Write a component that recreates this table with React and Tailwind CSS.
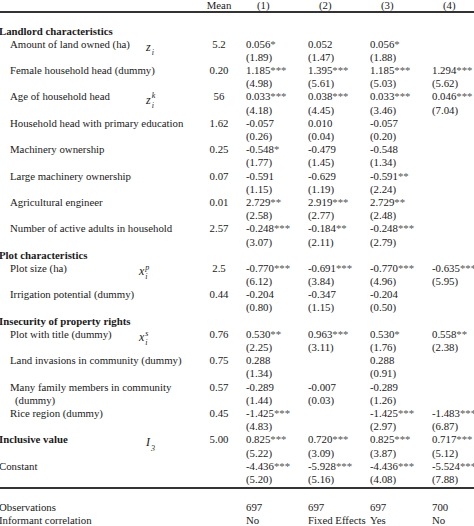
import React from "react";

const Sym = ({ b, sub, sup }) => (
  <span className="inline-flex items-center italic text-[12px]">
    <span>{b}</span>
    <span className="inline-flex flex-col text-[8px] ml-[1px] mt-[1px]">
      <span className="h-[9.2px] leading-[9.2px]">{sup || ""}</span>
      <span className="h-[9.2px] leading-[9.2px]">{sub}</span>
    </span>
  </span>
);

const Val = ({ v }) => {
  if (!v) return null;
  const m = v.match(/^([^*]*)(\**)$/);
  return (
    <>
      {m[1]}
      {m[2] && <span className="text-[#555]">{m[2]}</span>}
    </>
  );
};

const rows = [
  { head: "Landlord characteristics" },
  { label: "Amount of land owned (ha)", sym: { b: "z", sub: "i" }, symPad: "pl-[7px]", mean: "5.2", v: [["0.056*", "(1.89)"], ["0.052", "(1.47)"], ["0.056*", "(1.88)"], null] },
  { label: "Female household head (dummy)", mean: "0.20", v: [["1.185***", "(4.98)"], ["1.395***", "(5.61)"], ["1.185***", "(5.03)"], ["1.294***", "(5.62)"]] },
  { label: "Age of household head", sym: { b: "z", sub: "i", sup: "k" }, symPad: "pl-[7px]", mean: "56", v: [["0.033***", "(4.18)"], ["0.038***", "(4.45)"], ["0.033***", "(3.46)"], ["0.046***", "(7.04)"]] },
  { label: "Household head with primary education", mean: "1.62", v: [["-0.057", "(0.26)"], ["0.010", "(0.04)"], ["-0.057", "(0.20)"], null] },
  { label: "Machinery ownership", mean: "0.25", v: [["-0.548*", "(1.77)"], ["-0.479", "(1.45)"], ["-0.548", "(1.34)"], null] },
  { label: "Large machinery ownership", mean: "0.07", v: [["-0.591", "(1.15)"], ["-0.629", "(1.19)"], ["-0.591**", "(2.24)"], null] },
  { label: "Agricultural engineer", mean: "0.01", v: [["2.729**", "(2.58)"], ["2.919***", "(2.77)"], ["2.729**", "(2.48)"], null] },
  { label: "Number of active adults in household", mean: "2.57", v: [["-0.248***", "(3.07)"], ["-0.184**", "(2.11)"], ["-0.248***", "(2.79)"], null] },
  { head: "Plot characteristics" },
  { label: "Plot size (ha)", sym: { b: "x", sub: "i", sup: "p" }, symPad: "pl-[0px]", mean: "2.5", v: [["-0.770***", "(6.12)"], ["-0.691***", "(3.84)"], ["-0.770***", "(4.96)"], ["-0.635***", "(5.95)"]] },
  { label: "Irrigation potential (dummy)", mean: "0.44", v: [["-0.204", "(0.80)"], ["-0.347", "(1.15)"], ["-0.204", "(0.50)"], null] },
  { head: "Insecurity of property rights" },
  { label: "Plot with title (dummy)", sym: { b: "x", sub: "i", sup: "s" }, symPad: "pl-[0px]", mean: "0.76", v: [["0.530**", "(2.25)"], ["0.963***", "(3.11)"], ["0.530*", "(1.76)"], ["0.558**", "(2.38)"]] },
  { label: "Land invasions in community (dummy)", mean: "0.75", v: [["0.288", "(1.34)"], null, ["0.288", "(0.91)"], null] },
  { label: "Many family members in community", label2: "(dummy)", mean: "0.57", v: [["-0.289", "(1.44)"], ["-0.007", "(0.03)"], ["-0.289", "(1.26)"], null] },
  { label: "Rice region (dummy)", mean: "0.45", v: [["-1.425***", "(4.83)"], null, ["-1.425***", "(2.97)"], ["-1.483***", "(6.87)"]] },
  { label: "Inclusive value", bold: true, sym: { b: "I", sub: "3" }, symPad: "pl-[7px]", mean: "5.00", v: [["0.825***", "(5.22)"], ["0.720***", "(3.09)"], ["0.825***", "(3.87)"], ["0.717***", "(5.12)"]] },
  { label: "Constant", flat: true, mean: "", v: [["-4.436***", "(5.20)"], ["-5.928***", "(5.16)"], ["-4.436***", "(4.08)"], ["-5.524***", "(7.88)"]] },
];

const Line = ({ label, labelCls = "", sym, symPad = "", mean, vals }) => (
  <div className="flex h-[13.2px] leading-[13.2px] whitespace-nowrap">
    <div className={`w-[140px] shrink-0 ${labelCls}`}>{label}</div>
    <div className={`w-[60px] shrink-0 ${symPad}`}>{sym && <Sym {...sym} />}</div>
    <div className="w-[40px] shrink-0 text-center">{mean}</div>
    <div className="w-[7px] shrink-0" />
    {vals.map((v, i) => (
      <div key={i} className="w-[62px] shrink-0">
        <Val v={v} />
      </div>
    ))}
  </div>
);

export default function App() {
  return (
    <div className="w-[474px] h-[526px] overflow-hidden bg-white text-[#1a1a1a] text-[10.8px]" style={{ fontFamily: '"Liberation Serif", "Times New Roman", serif' }}>
      <div className="ml-[-1px]">
        <div className="flex h-[11px] leading-[11px] whitespace-nowrap">
          <div className="w-[200px] shrink-0" />
          <div className="w-[40px] shrink-0 text-center">Mean</div>
          <div className="w-[7px] shrink-0" />
          {["(1)", "(2)", "(3)", "(4)"].map((h) => (
            <div key={h} className="w-[62px] shrink-0 pl-[11px]">{h}</div>
          ))}
        </div>
        <div className="h-[1.5px] bg-[#333] w-[480px]" />

        <div className="pt-[12px]">
          {rows.map((r, i) => {
            if (r.head)
              return <Line key={i} label={r.head} labelCls="font-bold" vals={[]} />;
            const lc = r.bold ? "font-bold" : r.flat ? "" : "pl-[11px]";
            return (
              <React.Fragment key={i}>
                <Line label={r.label} labelCls={lc} sym={r.sym} symPad={r.symPad} mean={r.mean} vals={r.v.map((x) => (x ? x[0] : null))} />
                <Line label={r.label2 || ""} labelCls="pl-[16px]" vals={r.v.map((x) => (x ? x[1] : null))} />
              </React.Fragment>
            );
          })}
        </div>

        <div className="h-[1.5px] bg-[#333] w-[480px] mt-[1px]" />
        <div className="pt-[12px]">
          <Line label="Observations" vals={["697", "697", "697", "700"]} />
          <Line label="Informant correlation" vals={["No", "Fixed Effects", "Yes", "No"]} />
        </div>
      </div>
    </div>
  );
}
